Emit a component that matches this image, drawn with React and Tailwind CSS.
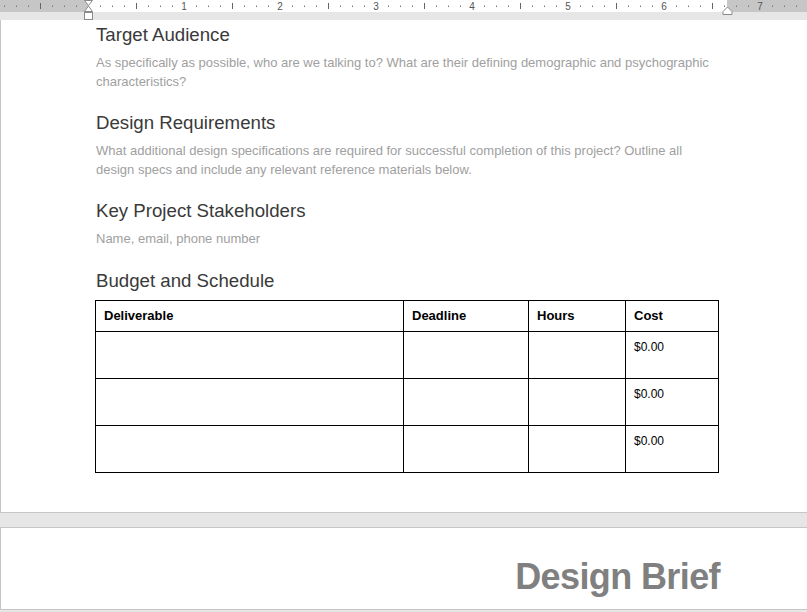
import React from "react";

const font = { fontFamily: '"Liberation Sans", Arial, sans-serif' };

function Ruler() {
  const marks = [];
  for (let k = -7; k <= 59; k++) {
    const x = 88 + 12 * k;
    if (x < 0 || x > 807) continue;
    if (k > 0 && k % 8 === 0) {
      marks.push(
        <text key={k} x={x} y={9.5} fontSize="10" textAnchor="middle" fill="#555" fontFamily="Liberation Sans, Arial, sans-serif">
          {k / 8}
        </text>
      );
    } else if (k !== 0 && Math.abs(k) % 8 === 4) {
      marks.push(<rect key={k} x={x} y={3} width={1} height={6} fill="#666" />);
    } else if (k !== 0) {
      marks.push(<rect key={k} x={x} y={5.5} width={1} height={1.5} fill="#777" />);
    }
  }
  return (
    <div className="relative h-[20px]">
      <div className="flex h-[12px]">
        <div className="w-[88px] bg-[#c6c6c6]" />
        <div className="w-[639px] bg-white" />
        <div className="flex-1 bg-[#c6c6c6]" />
      </div>
      <svg className="absolute left-0 top-0" width="807" height="20" viewBox="0 0 807 20">
        {marks}
        {/* hanging / first-line indent marker */}
        <path d="M84.5 0.5 H92.5 L88.5 5.5 Z" fill="#fff" stroke="#8a8a8a" />
        <path d="M88.5 6 L92.5 11.5 H84.5 Z" fill="#fff" stroke="#8a8a8a" />
        <rect x="84.5" y="12.5" width="8" height="7" fill="#fff" stroke="#8a8a8a" />
        {/* right indent marker */}
        <path d="M727.5 7 L732 11.5 V14.5 H723 V11.5 Z" fill="#fff" stroke="#8a8a8a" />
      </svg>
    </div>
  );
}

function Section({ title, children, first }) {
  return (
    <div className={first ? "" : "mt-[20px]"}>
      <h2 className="text-[18.67px] leading-[24px] text-[#3a3a3a]">{title}</h2>
      {children && (
        <p className="mt-[6px] text-[13px] leading-[19px] text-[#a0a0a0] pr-[8px]">{children}</p>
      )}
    </div>
  );
}

export default function App() {
  const headers = ["Deliverable", "Deadline", "Hours", "Cost"];
  const rows = [0, 1, 2];
  return (
    <div className="w-[807px] h-[612px] overflow-hidden bg-[#e6e6e6]" style={font}>
      <Ruler />
      <div className="h-[493px] bg-white border-l border-b border-[#c6c6c6]">
        <div className="pl-[95px] pt-[3px] w-[720px]">
          <Section title="Target Audience" first>
            As specifically as possible, who are we talking to? What are their defining demographic and psychographic characteristics?
          </Section>
          <Section title="Design Requirements">
            What additional design specifications are required for successful completion of this project? Outline all design specs and include any relevant reference materials below.
          </Section>
          <Section title="Key Project Stakeholders">Name, email, phone number</Section>
          <div className="mt-[21px]">
            <h2 className="text-[18.67px] leading-[24px] text-[#3a3a3a]">Budget and Schedule</h2>
          </div>
          <div className="mt-[7px] -ml-px grid grid-cols-[308px_125px_97px_93px] border-l border-t border-black w-fit">
            {headers.map((h) => (
              <div key={h} className="h-[31px] border-r border-b border-black pl-[8px] pt-[7px] text-[13px] leading-[16px] font-bold text-black">
                {h}
              </div>
            ))}
            {rows.map((r) => (
              <React.Fragment key={r}>
                <div className="h-[47px] border-r border-b border-black" />
                <div className="h-[47px] border-r border-b border-black" />
                <div className="h-[47px] border-r border-b border-black" />
                <div className="h-[47px] border-r border-b border-black pl-[8px] pt-[7px] text-[12px] leading-[16px] text-black">
                  $0.00
                </div>
              </React.Fragment>
            ))}
          </div>
        </div>
      </div>
      <div className="mt-[14px] h-[83px] bg-white border-l border-t border-b border-[#c6c6c6]">
        <div className="w-[719px] pt-[29px] text-right">
          <div className="text-[36px] leading-[40px] font-bold tracking-[-0.6px] text-[#808080]">Design Brief</div>
        </div>
      </div>
    </div>
  );
}
